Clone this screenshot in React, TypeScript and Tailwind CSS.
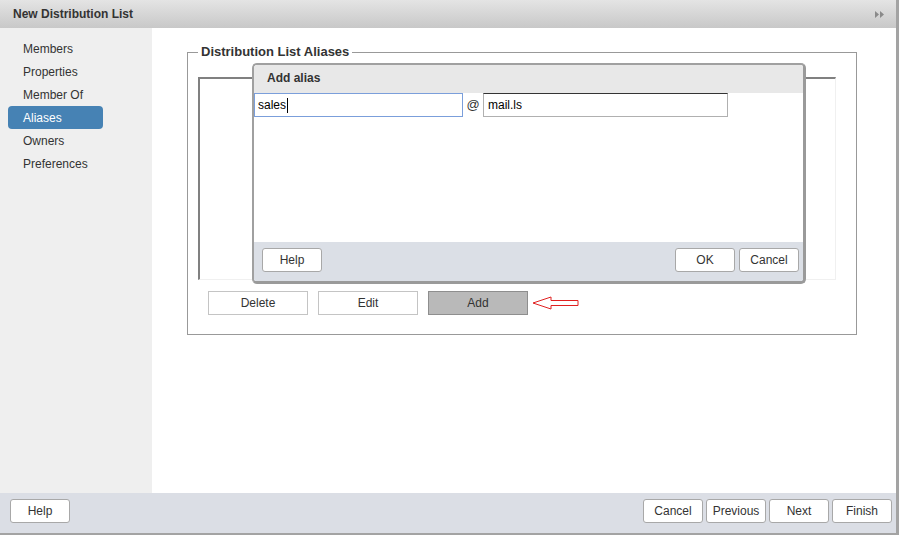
import React from "react";

const navItems = ["Members", "Properties", "Member Of", "Aliases", "Owners", "Preferences"];

function Btn({ label, className = "" }: { label: string; className?: string }) {
  return (
    <button
      className={
        "h-[24px] w-[60px] rounded-[3px] border border-[#a8a8a8] bg-white text-[12px] text-[#333] " + className
      }
    >
      {label}
    </button>
  );
}

function FlatBtn({ label, active = false }: { label: string; active?: boolean }) {
  return (
    <button
      className={
        "h-[24px] w-[100px] border text-[12px] text-[#333] " +
        (active ? "border-[#8e8e8e] bg-[#b9b9b9]" : "border-[#c4c4c4] bg-white")
      }
    >
      {label}
    </button>
  );
}

function RedArrow() {
  return (
    <svg width="48" height="14" viewBox="0 0 48 14" className="ml-[4px]">
      <path d="M1 7 L19 1 L19 4.5 L46 4.5 L46 9.5 L19 9.5 L19 13 Z" fill="white" stroke="#e02020" strokeWidth="1" />
    </svg>
  );
}

export default function App() {
  return (
    <div className="relative h-[537px] w-[901px] bg-white" style={{ fontFamily: '"Liberation Sans", Arial, sans-serif' }}>
      <div className="flex h-[535px] w-[899px] flex-col border-r-[3px] border-b-[2px] border-[#a3a3a3]">
        {/* title bar */}
        <div className="flex h-[28px] shrink-0 items-center justify-between bg-gradient-to-b from-[#e4e4e4] to-[#c8c8c8] pl-[13px] pr-[12px]">
          <span className="text-[12px] font-bold text-[#333]">New Distribution List</span>
          <svg width="9" height="7" viewBox="0 0 9 7">
            <path d="M0 0 L4 3.5 L0 7 Z M5 0 L9 3.5 L5 7 Z" fill="#8a8a8a" />
          </svg>
        </div>

        <div className="flex min-h-0 flex-1">
          {/* sidebar */}
          <div className="w-[152px] shrink-0 bg-[#efefef] pl-[8px] pt-[9px]">
            {navItems.map((n) => (
              <div
                key={n}
                className={
                  "flex h-[23px] w-[95px] items-center rounded-[4px] pl-[15px] text-[12px] " +
                  (n === "Aliases" ? "bg-[#4682b4] text-white" : "text-[#333]")
                }
              >
                {n}
              </div>
            ))}
          </div>

          {/* content */}
          <div className="relative flex-1 bg-white pl-[35px] pt-[16px]">
            <fieldset className="w-[670px] border border-[#999] pb-[19px] pl-[10px] pr-[20px] pt-[17px]">
              <legend className="px-[3px] text-[13px] font-bold leading-[16px] text-[#333]">
                Distribution List Aliases
              </legend>
              <div className="h-[203px] w-[638px] border-l-[2px] border-t-[2px] border-r border-b border-l-[#808080] border-t-[#808080] border-r-[#f0f0f0] border-b-[#f0f0f0] bg-white" />
              <div className="mt-[11px] flex items-center gap-[10px] pl-[10px]">
                <FlatBtn label="Delete" />
                <FlatBtn label="Edit" />
                <div className="flex items-center">
                  <FlatBtn label="Add" active />
                  <RedArrow />
                </div>
              </div>
            </fieldset>

            {/* dialog overlay */}
            <div className="absolute left-[100px] top-[35px] flex h-[221px] w-[554px] flex-col overflow-hidden rounded-[5px] border-l-[2px] border-t-[2px] border-r-[3px] border-b-[3px] border-l-[#a0a0a0] border-t-[#a0a0a0] border-r-[#9a9a9a] border-b-[#9a9a9a] bg-white">
              <div className="flex h-[28px] shrink-0 items-center bg-[#e8e8e8] pb-[3px] pl-[13px] text-[12px] font-bold text-[#333]">
                Add alias
              </div>
              <div className="flex h-[24px] items-center">
                <div className="flex h-[24px] w-[209px] items-center border border-[#7b9fdb] bg-white pl-[3px] text-[12px] text-black">
                  sales<span className="ml-[1px] inline-block h-[15px] w-px bg-black" />
                </div>
                <span className="w-[20px] text-center text-[13px] text-[#333]">@</span>
                <div className="flex h-[24px] w-[245px] items-center border border-[#b0b0b0] border-t-[#333] bg-white pl-[4px] text-[12px] text-black">
                  mail.ls
                </div>
              </div>
              <div className="flex-1" />
              <div className="flex h-[39px] shrink-0 items-start justify-between bg-[#dbdfe6] pl-[8px] pr-[4px] pt-[6px]">
                <Btn label="Help" />
                <div className="flex gap-[4px]">
                  <Btn label="OK" />
                  <Btn label="Cancel" className="w-[59px]" />
                </div>
              </div>
            </div>
          </div>
        </div>

        {/* bottom bar */}
        <div className="flex h-[40px] shrink-0 items-start justify-between bg-[#dbdee5] pl-[10px] pr-[4px] pt-[6px]">
          <Btn label="Help" />
          <div className="flex gap-[3px]">
            <Btn label="Cancel" />
            <Btn label="Previous" />
            <Btn label="Next" />
            <Btn label="Finish" />
          </div>
        </div>
      </div>
    </div>
  );
}
